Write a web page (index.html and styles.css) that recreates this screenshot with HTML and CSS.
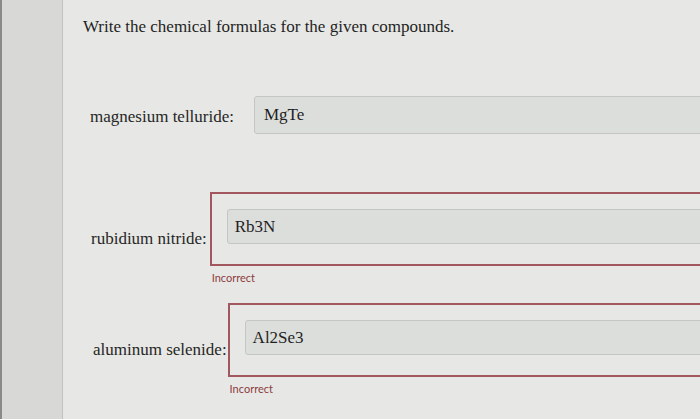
FILE: index.html
```html
<!DOCTYPE html>
<html>
<head>
<meta charset="utf-8">
<link rel="stylesheet" href="styles.css">
</head>
<body>
<div class="screen">
  <div class="sidebar"></div>
  <div class="main">
    <h1 class="title">Write the chemical formulas for the given compounds.</h1>

    <div class="row row-first">
      <span class="label">magnesium telluride:</span>
      <div class="field">
        <div class="box">
          <div class="input">MgTe</div>
        </div>
      </div>
    </div>

    <div class="row row-second">
      <span class="label">rubidium nitride:</span>
      <div class="field">
        <div class="box box-wrong">
          <div class="input">Rb3N</div>
        </div>
        <div class="msg">Incorrect</div>
      </div>
    </div>

    <div class="row row-third">
      <span class="label">aluminum selenide:</span>
      <div class="field">
        <div class="box box-wrong">
          <div class="input">Al2Se3</div>
        </div>
        <div class="msg">Incorrect</div>
      </div>
    </div>
  </div>
</div>
</body>
</html>
```
FILE: styles.css
```css
html, body {
  margin: 0;
  padding: 0;
  width: 700px;
  height: 419px;
  overflow: hidden;
  background: #e7e8e5;
}

.screen {
  display: flex;
  height: 419px;
  overflow: hidden;
}

.sidebar {
  width: 60px;
  flex: 0 0 60px;
  background: #d8d9d6;
  border-left: 2px solid #8a8b88;
  border-right: 1px solid #c2c3c0;
}

.main {
  flex: 1;
  padding: 17px 0 0 20px;
  font-family: "Liberation Serif", "Times New Roman", serif;
  color: #1f1f1f;
  min-width: 0;
  overflow: hidden;
}

.title {
  margin: 0;
  font-size: 17px;
  line-height: 20px;
  font-weight: normal;
  white-space: nowrap;
}

.row {
  display: flex;
  align-items: center;
  gap: 3px;
  padding-left: 7px;
}

.row-first { margin-top: 40px; }
.row-first .label { padding-top: 1px; }
.row-second { margin-top: 36px; padding-left: 8px; }
.row-third { margin-top: 18px; padding-left: 10px; gap: 1px; }

.label {
  font-size: 17px;
  line-height: 20px;
  white-space: nowrap;
  color: #262626;
}

.field {
  width: 600px;
  flex: 0 0 600px;
}

.box {
  border: 2px solid transparent;
  padding: 15px 0 20px 15px;
}

.row-first .box {
  padding-top: 17px;
  padding-bottom: 20px;
}

.box-wrong {
  border-color: #a2565d;
}

.input {
  height: 35px;
  box-sizing: border-box;
  background: #dcdedb;
  border: 1px solid #c3c6c1;
  border-radius: 3px;
  padding: 0 8px 0 7px;
  font-size: 17px;
  line-height: 33px;
  color: #1f1f1f;
}

.row-first .input {
  height: 38px;
  line-height: 36px;
  padding-left: 9px;
}

.msg {
  margin-top: 5px;
  padding-left: 2px;
  font-family: Lato, "Open Sans", sans-serif;
  font-size: 11px;
  line-height: 14px;
  color: #8c3c3f;
}
```
